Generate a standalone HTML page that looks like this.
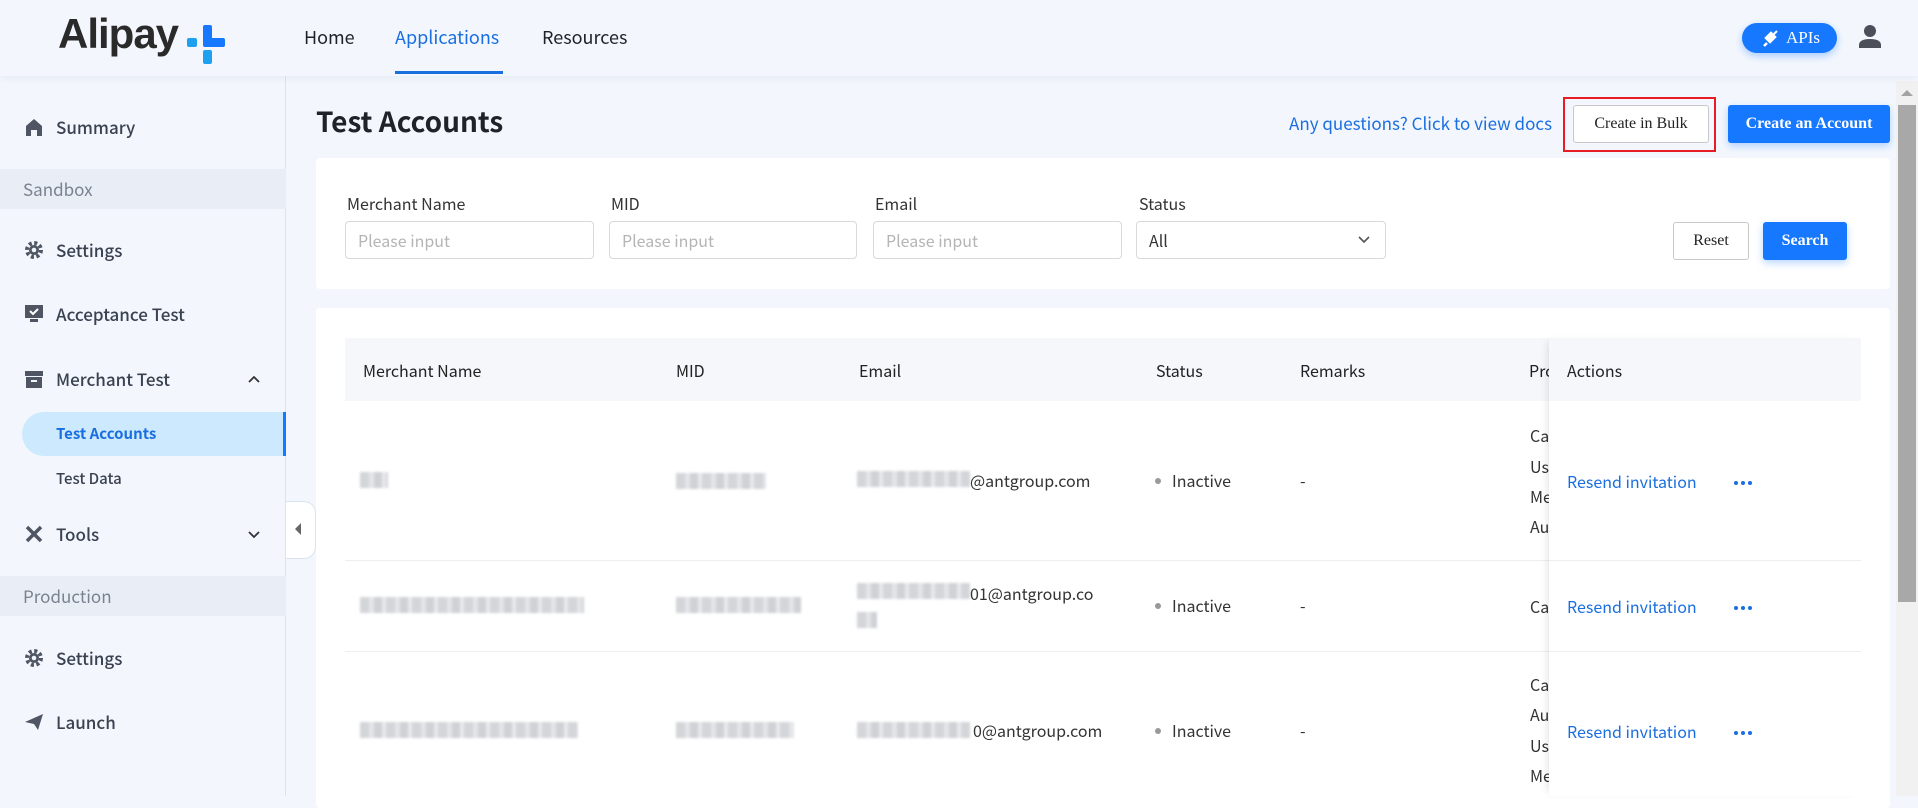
<!DOCTYPE html>
<html><head><meta charset="utf-8"><style>
*{box-sizing:border-box;margin:0;padding:0}
body{width:1918px;height:796px;overflow:hidden;background:#f3f7fd;font-family:"Noto Sans CJK SC","Liberation Sans",sans-serif;color:#1f2329;position:relative}
.abs{position:absolute}
.hdr{left:0;top:0;width:1918px;height:76px;background:#f3f7fd;box-shadow:0 2px 8px rgba(0,30,80,.06);z-index:3}
.nav{font-size:18px;top:24px;color:#1f2329}
.side{left:0;top:76px;width:286px;height:720px;background:#f3f7fd;border-right:1px solid #dbe3ee}
.si{position:absolute;left:56px;font-size:17px;font-weight:500;color:#3a4150;line-height:24px}
.ic{position:absolute;left:24px;width:20px;height:20px}
.band{position:absolute;left:0;width:286px;height:40px;background:#e9eef6;color:#7a8290;font-size:17px;padding-left:23px;line-height:40px}
.card{background:#fff;border-radius:4px}
.lbl{font-size:16px;color:#333;top:191px}
.inp{top:221px;height:38px;border:1px solid #d9d9d9;border-radius:4px;background:#fff;font-size:16px;color:#b5b5b5;padding-left:12px;line-height:36px}
.th{font-size:16px;color:#222;top:358px}
.blur{position:absolute;height:16px;background:repeating-linear-gradient(90deg,#d3d5d9 0 9px,#e4e5e8 9px 14px,#cfd1d5 14px 22px,#e8e9eb 22px 26px);filter:blur(1.2px)}
.td{position:absolute;font-size:16px;color:#333;line-height:22px}
.dot{position:absolute;width:6px;height:6px;border-radius:3px;background:#999}
.pr{position:absolute;left:1530px;font-size:16px;color:#333;width:20px;overflow:hidden;white-space:nowrap}
.rs{position:absolute;left:1567px;font-size:16px;color:#1a6fe0}
.more{position:absolute;left:1734px;width:18px;height:4px}
.more i{position:absolute;top:0;width:4px;height:4px;border-radius:2px;background:#1a6fe0}
</style></head><body>
<div class="abs hdr">
 <div class="abs" style="left:58px;top:10px;font-family:'Liberation Sans',sans-serif;font-weight:bold;font-size:42px;color:#2a2a2a;letter-spacing:-1px">Alipay</div>
 <div class="abs" style="left:187px;top:38px;width:10px;height:9px;background:#1ea0f0;border-radius:2px"></div>
 <div class="abs" style="left:203px;top:25px;width:9px;height:20px;background:#1677ff;border-radius:2px"></div>
 <div class="abs" style="left:203px;top:38px;width:22px;height:9px;background:#1677ff;border-radius:2px"></div>
 <div class="abs" style="left:203px;top:50px;width:9px;height:14px;background:#1ea0f0;border-radius:2px"></div>
 <div class="abs nav" style="left:304px">Home</div>
 <div class="abs nav" style="left:395px;color:#1a6fe0">Applications</div>
 <div class="abs" style="left:395px;top:71px;width:108px;height:3px;background:#1a6fe0"></div>
 <div class="abs nav" style="left:542px">Resources</div>
 <div class="abs" style="left:1742px;top:23px;width:95px;height:30px;border-radius:15px;background:#1677ff;box-shadow:0 3px 8px rgba(22,119,255,.35);color:#fff;font-family:'Liberation Serif',serif;font-size:17px;line-height:30px;padding-left:44px">APIs</div>
 <svg class="abs" style="left:1761px;top:29px" width="18" height="18" viewBox="0 0 18 18"><path d="M3 17l3-3M5 9l4 4 5-5-4-4z" stroke="#fff" stroke-width="2.5" fill="#fff"/><path d="M12 6l4-4" stroke="#fff" stroke-width="2"/></svg>
 <svg class="abs" style="left:1859px;top:24px" width="22" height="24" viewBox="0 0 22 24"><circle cx="11" cy="7" r="6" fill="#4a4f59"/><path d="M0 24v-3c0-4 4-6 11-6s11 2 11 6v3z" fill="#4a4f59"/></svg>
</div>
<div class="abs side">
 <svg class="ic" style="top:41px" viewBox="0 0 20 20"><path d="M2 9L10 2l8 7v10h-5v-6H7v6H2z" fill="#4f5563"/></svg>
 <div class="si" style="top:39px">Summary</div>
 <div class="band" style="top:93px">Sandbox</div>
 <svg class="ic" style="top:164px" viewBox="0 0 20 20"><circle cx="10" cy="10" r="7" fill="none" stroke="#4f5563" stroke-width="4" stroke-dasharray="3 2.5"/><circle cx="10" cy="10" r="5" fill="#4f5563"/><circle cx="10" cy="10" r="2.3" fill="#f3f7fd"/></svg>
 <div class="si" style="top:162px">Settings</div>
 <svg class="ic" style="top:228px" viewBox="0 0 20 20"><rect x="1" y="1" width="18" height="13" fill="#4f5563"/><path d="M6 7l3 3 5-5" stroke="#fff" stroke-width="2" fill="none"/><rect x="6" y="15" width="8" height="3" fill="#4f5563"/></svg>
 <div class="si" style="top:226px">Acceptance Test</div>
 <svg class="ic" style="top:293px" viewBox="0 0 20 20"><path d="M1 2h18v5H1z" fill="#4f5563"/><rect x="2" y="8" width="16" height="11" fill="#4f5563"/><rect x="7" y="11" width="6" height="2" fill="#f3f7fd"/></svg>
 <div class="si" style="top:291px">Merchant Test</div>
 <svg class="abs" style="left:247px;top:298px" width="14" height="10" viewBox="0 0 14 10"><path d="M2 8l5-5 5 5" stroke="#333" stroke-width="1.8" fill="none"/></svg>
 <div class="abs" style="left:22px;top:336px;width:264px;height:44px;background:#cde9fd;border-radius:22px 0 0 22px;border-right:3px solid #1677ff"></div>
 <div class="si" style="top:346px;font-size:15px;font-weight:bold;color:#1a6fe0">Test Accounts</div>
 <div class="si" style="top:391px;font-size:15px;font-weight:500">Test Data</div>
 <svg class="ic" style="top:448px" viewBox="0 0 20 20"><path d="M3 3l14 14M17 3L3 17" stroke="#4f5563" stroke-width="3.5"/></svg>
 <div class="si" style="top:446px">Tools</div>
 <svg class="abs" style="left:247px;top:454px" width="14" height="10" viewBox="0 0 14 10"><path d="M2 2l5 5 5-5" stroke="#333" stroke-width="1.8" fill="none"/></svg>
 <div class="band" style="top:500px">Production</div>
 <svg class="ic" style="top:572px" viewBox="0 0 20 20"><circle cx="10" cy="10" r="7" fill="none" stroke="#4f5563" stroke-width="4" stroke-dasharray="3 2.5"/><circle cx="10" cy="10" r="5" fill="#4f5563"/><circle cx="10" cy="10" r="2.3" fill="#f3f7fd"/></svg>
 <div class="si" style="top:570px">Settings</div>
 <svg class="ic" style="top:636px" viewBox="0 0 20 20"><path d="M1 10L19 2l-5 16-4-6z" fill="#4f5563"/></svg>
 <div class="si" style="top:634px">Launch</div>
</div>
<div class="abs" style="left:286px;top:501px;width:30px;height:58px;background:#fff;border:1px solid #dbe3ee;border-left:none;border-radius:0 12px 12px 0"></div>
<svg class="abs" style="left:293px;top:522px" width="10" height="14"><path d="M8 1L2 7l6 6z" fill="#666"/></svg>

<div class="abs" style="left:316px;top:101px;font-size:28px;font-weight:bold;color:#1f2329">Test Accounts</div>
<div class="abs" style="left:1289px;top:110px;font-size:17px;color:#1a6fe0">Any questions? Click to view docs</div>
<div class="abs" style="left:1563px;top:97px;width:153px;height:55px;border:2px solid #e81c24"></div>
<div class="abs" style="left:1573px;top:105px;width:136px;height:38px;border:1px solid #c8c8c8;border-radius:3px;background:#fff;font-family:'Liberation Serif',serif;font-size:16px;text-align:center;line-height:36px;color:#222">Create in Bulk</div>
<div class="abs" style="left:1728px;top:105px;width:162px;height:38px;border-radius:3px;background:#1677ff;font-family:'Liberation Serif',serif;font-weight:bold;font-size:16px;text-align:center;line-height:38px;color:#fff;box-shadow:0 3px 8px rgba(22,119,255,.3)">Create an Account</div>

<div class="abs card" style="left:316px;top:158px;width:1574px;height:131px"></div>
<div class="abs lbl" style="left:347px">Merchant Name</div>
<div class="abs lbl" style="left:611px">MID</div>
<div class="abs lbl" style="left:875px">Email</div>
<div class="abs lbl" style="left:1139px">Status</div>
<div class="abs inp" style="left:345px;width:249px">Please input</div>
<div class="abs inp" style="left:609px;width:248px">Please input</div>
<div class="abs inp" style="left:873px;width:249px">Please input</div>
<div class="abs inp" style="left:1136px;width:250px;color:#333">All</div>
<svg class="abs" style="left:1358px;top:236px" width="12" height="8"><path d="M1 1l5 5 5-5" stroke="#555" stroke-width="1.6" fill="none"/></svg>
<div class="abs" style="left:1673px;top:222px;width:76px;height:38px;border:1px solid #c8c8c8;border-radius:3px;background:#fff;font-family:'Liberation Serif',serif;font-size:16px;text-align:center;line-height:36px;color:#222">Reset</div>
<div class="abs" style="left:1763px;top:222px;width:84px;height:38px;border-radius:3px;background:#1677ff;font-family:'Liberation Serif',serif;font-weight:bold;font-size:16px;text-align:center;line-height:38px;color:#fff;box-shadow:0 3px 8px rgba(22,119,255,.3)">Search</div>

<div class="abs card" style="left:316px;top:308px;width:1574px;height:500px"></div>
<div class="abs" style="left:345px;top:338px;width:1516px;height:63px;background:#f5f7fa"></div>
<div class="abs th" style="left:363px">Merchant Name</div>
<div class="abs th" style="left:676px">MID</div>
<div class="abs th" style="left:859px">Email</div>
<div class="abs th" style="left:1156px">Status</div>
<div class="abs th" style="left:1300px">Remarks</div>
<div class="abs th" style="left:1529px;width:20px;overflow:hidden">Pro</div>
<div class="abs" style="left:345px;top:560px;width:1516px;height:1px;background:#eceef1"></div>
<div class="abs" style="left:345px;top:651px;width:1516px;height:1px;background:#eceef1"></div>
<div class="blur" style="left:360px;top:472px;width:28px"></div>
<div class="blur" style="left:676px;top:473px;width:90px"></div>
<div class="blur" style="left:857px;top:471px;width:113px"></div>
<div class="td" style="left:970px;top:469px">@antgroup.com</div>
<div class="blur" style="left:360px;top:597px;width:224px"></div>
<div class="blur" style="left:676px;top:597px;width:125px"></div>
<div class="blur" style="left:857px;top:583px;width:113px"></div>
<div class="td" style="left:970px;top:582px">01@antgroup.co</div>
<div class="blur" style="left:857px;top:612px;width:20px"></div>
<div class="blur" style="left:360px;top:722px;width:218px"></div>
<div class="blur" style="left:676px;top:722px;width:118px"></div>
<div class="blur" style="left:857px;top:722px;width:113px"></div>
<div class="td" style="left:973px;top:719px">0@antgroup.com</div>
<div class="dot" style="left:1155px;top:478px"></div><div class="td" style="left:1172px;top:469px">Inactive</div>
<div class="dot" style="left:1155px;top:603px"></div><div class="td" style="left:1172px;top:594px">Inactive</div>
<div class="dot" style="left:1155px;top:728px"></div><div class="td" style="left:1172px;top:719px">Inactive</div>
<div class="td" style="left:1300px;top:469px">-</div>
<div class="td" style="left:1300px;top:594px">-</div>
<div class="td" style="left:1300px;top:719px">-</div>
<div class="pr" style="top:423px">Ca</div><div class="pr" style="top:454px">Us</div><div class="pr" style="top:484px">Me</div><div class="pr" style="top:514px">Au</div>
<div class="pr" style="top:594px">Ca</div>
<div class="pr" style="top:672px">Ca</div><div class="pr" style="top:702px">Au</div><div class="pr" style="top:733px">Us</div><div class="pr" style="top:763px">Me</div>
<div class="abs" style="left:1549px;top:338px;width:312px;height:458px;background:#fff;box-shadow:-5px 0 8px -4px rgba(0,0,0,.12)"></div>
<div class="abs" style="left:1549px;top:338px;width:312px;height:63px;background:#f5f7fa"></div>
<div class="abs" style="left:1549px;top:560px;width:312px;height:1px;background:#eceef1"></div>
<div class="abs" style="left:1549px;top:651px;width:312px;height:1px;background:#eceef1"></div>
<div class="abs th" style="left:1567px">Actions</div>
<div class="rs" style="top:469px">Resend invitation</div><div class="more" style="top:481px"><i style="left:0"></i><i style="left:7px"></i><i style="left:14px"></i></div>
<div class="rs" style="top:594px">Resend invitation</div><div class="more" style="top:606px"><i style="left:0"></i><i style="left:7px"></i><i style="left:14px"></i></div>
<div class="rs" style="top:719px">Resend invitation</div><div class="more" style="top:731px"><i style="left:0"></i><i style="left:7px"></i><i style="left:14px"></i></div>
<div class="abs" style="left:1896px;top:81px;width:22px;height:715px;background:#f1f1f1"></div>
<svg class="abs" style="left:1900px;top:88px" width="14" height="10"><path d="M1 8L7 2l6 6z" fill="#a3a3a3"/></svg>
<div class="abs" style="left:1898px;top:105px;width:18px;height:497px;background:#a8a8a8"></div>
</body></html>
